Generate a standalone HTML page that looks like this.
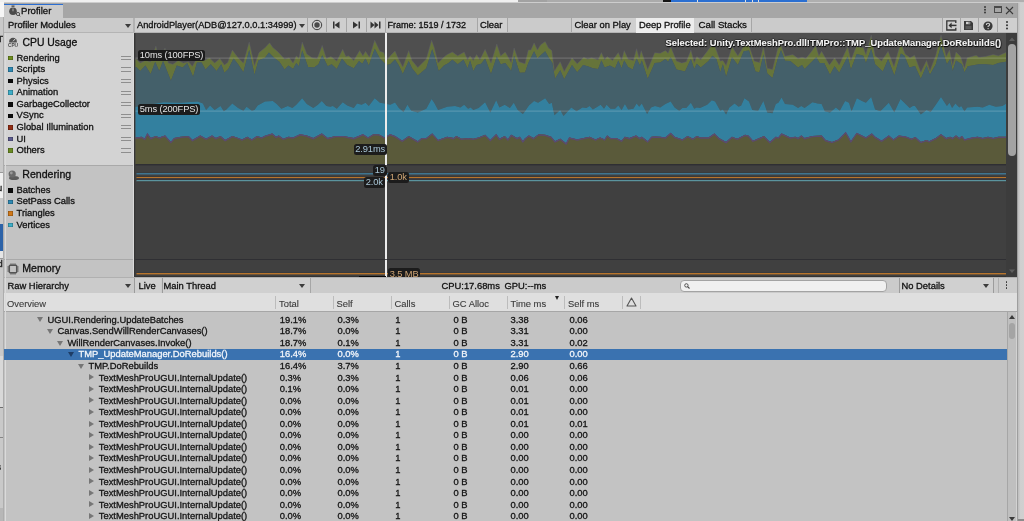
<!DOCTYPE html>
<html><head><meta charset="utf-8">
<style>
*{box-sizing:border-box;margin:0;padding:0}
html,body{width:1024px;height:521px;overflow:hidden;background:#c6c6c6}
body{position:relative;will-change:transform;font-family:"Liberation Sans",sans-serif;font-size:9.4px;color:#111}
.a{position:absolute}
.t{position:absolute;white-space:pre;line-height:12px;height:12px;-webkit-text-stroke:0.3px currentColor}
.sq{position:absolute;left:8px;width:4.7px;height:4.7px;box-shadow:inset 0 0 0 0.6px rgba(0,0,0,0.35);margin-top:0.6px}
.hb{position:absolute;left:121px;width:10px;height:4.3px;border-top:1.3px solid #8e8e8e;border-bottom:1.3px solid #8e8e8e}
.vs{position:absolute;width:1px;background:#a6a6a6}
.lbl{position:absolute;background:#1c1c1c;border-radius:2.5px;white-space:pre;font-size:9.3px;line-height:11.4px;height:11px;padding:0 1.8px;color:#e4e4e4;overflow:hidden;letter-spacing:-0.12px}
.r{position:absolute;left:4px;width:1003px;height:12px}
.r .t{top:0}
.sel .t{color:#fff}
.tri{position:absolute;width:0;height:0}
</style></head><body>
<!-- left background strip -->
<div class="a" style="left:0;top:0;width:4px;height:17px;background:#f6f6f6"></div>
<div class="a" style="left:0;top:17px;width:4px;height:504px;background:#c9c9c9"></div>
<div class="a" style="left:0;top:172px;width:4px;height:1px;background:#9a9a9a"></div>
<div class="a" style="left:0;top:173px;width:4px;height:25px;background:#f0f0f0"></div>
<div class="t" style="left:-3px;top:182px;color:#222">u</div>
<div class="a" style="left:0;top:223.5px;width:4px;height:27.5px;background:#2d63a8"></div>
<div class="a" style="left:0;top:251px;width:4px;height:7px;background:#e6e6e6"></div>
<div class="a" style="left:0;top:258px;width:4px;height:1px;background:#9a9a9a"></div>
<div class="t" style="left:-2.5px;top:258px;color:#222">d</div>
<div class="t" style="left:-2.5px;top:32.5px;color:#222">T</div>
<div class="a" style="left:0;top:356px;width:3.3px;height:51px;background:#d8d8d8"></div>
<div class="a" style="left:0;top:407px;width:3.3px;height:1px;background:#6e6e6e"></div>
<div class="a" style="left:0;top:437px;width:3.3px;height:1px;background:#858585"></div>
<div class="t" style="left:-3.5px;top:461px;color:#333">s</div>
<div class="a" style="left:0;top:508px;width:3.3px;height:13px;background:#b7b7b7"></div>


<!-- right strip -->
<div class="a" style="left:1016.5px;top:0;width:7.5px;height:521px;background:linear-gradient(to right,#bdbdbd,#cfcfcf 40%,#d0d0d0);border-left:1px solid #9e9e9e"></div>
<div class="a" style="left:1017.5px;top:519px;width:6.5px;height:2px;background:#8c8c8c"></div>

<!-- window top -->
<div class="a" style="left:0;top:0;width:1024px;height:2px;background:#f0f0f0"></div>
<div class="a" style="left:518px;top:0;width:29px;height:2px;background:#a2a2a2"></div>
<div class="a" style="left:547px;top:0;width:116px;height:2px;background:#ababab"></div>
<div class="a" style="left:663px;top:0;width:8px;height:2px;background:#151515"></div>
<div class="a" style="left:671px;top:0;width:136px;height:2px;background:#2b6fd1"></div>
<div class="a" style="left:697px;top:0;width:1px;height:2px;background:#e0e0e0"></div>
<div class="a" style="left:745px;top:0;width:1px;height:2px;background:#e0e0e0"></div>
<div class="a" style="left:752px;top:0;width:1px;height:2px;background:#e0e0e0"></div>
<div class="a" style="left:758px;top:0;width:1px;height:2px;background:#e0e0e0"></div>
<div class="a" style="left:807px;top:0;width:217px;height:2px;background:#afafaf"></div>
<div class="a" style="left:4px;top:1.5px;width:1020px;height:1.5px;background:#cdcdcd"></div>
<div class="a" style="left:4px;top:3px;width:1013px;height:15px;background:#a6a6a6"></div>
<div class="a" style="left:4px;top:4px;width:59px;height:14px;background:#cbcbcb"></div>
<div class="a" style="left:4px;top:3.5px;width:59px;height:1.5px;background:#2b6ed2"></div>
<div class="t" style="left:21px;top:5.2px;font-size:9.6px">Profiler</div>
<!-- tab icon -->
<svg class="a" style="left:8px;top:5px" width="13" height="12" viewBox="0 0 13 12">
 <rect x="3.5" y="0.5" width="3" height="1.3" fill="#444"/>
 <circle cx="5" cy="6.3" r="3.8" fill="#4a4a4a"/>
 <path d="M5 3.5 V6.3" stroke="#bbb" stroke-width="0.9"/>
 <circle cx="10" cy="9" r="1.6" fill="none" stroke="#444" stroke-width="0.9"/>
 <path d="M11 10 L12.3 11.3" stroke="#444" stroke-width="0.9"/>
</svg>
<!-- tab bar right icons -->
<div class="a" style="left:983.8px;top:6px;width:1.9px;height:1.9px;border-radius:1px;background:#3a3a3a;box-shadow:0 2.8px 0 #3a3a3a,0 5.6px 0 #3a3a3a"></div>
<div class="a" style="left:994px;top:6px;width:8px;height:7px;border:1px solid #4a4a4a;border-top-width:2px"></div>
<svg class="a" style="left:1005px;top:5.5px" width="9" height="9" viewBox="0 0 9 9"><path d="M1 1 L8 8 M8 1 L1 8" stroke="#3a3a3a" stroke-width="1.1"/></svg>

<!-- toolbar -->
<div class="a" style="left:4px;top:18px;width:1013px;height:15px;background:#cbcbcb"></div>
<div class="a" style="left:4px;top:32px;width:1013px;height:1px;background:#b4b4b4"></div>
<div class="t" style="left:8px;top:19px">Profiler Modules</div>
<div class="tri" style="left:125px;top:23.5px;border-left:3.5px solid transparent;border-right:3.5px solid transparent;border-top:4px solid #3c3c3c"></div>
<div class="a" style="left:133px;top:18px;width:2px;height:15px;background:#b2b2b2"></div>
<div class="a" style="left:135px;top:18px;width:172px;height:14px;background:#cfcfcf"></div>
<div class="t" style="left:137px;top:19px;font-size:9.25px">AndroidPlayer(ADB@127.0.0.1:34999)</div>
<div class="tri" style="left:298.5px;top:23.5px;border-left:3.5px solid transparent;border-right:3.5px solid transparent;border-top:4px solid #3c3c3c"></div>
<div class="vs" style="left:307px;top:18px;height:14px"></div>
<div class="a" style="left:308px;top:18px;width:18px;height:14px;background:#cfcfcf"></div>
<svg class="a" style="left:311px;top:19px" width="12" height="12" viewBox="0 0 12 12"><circle cx="6" cy="6" r="4.7" fill="none" stroke="#3f3f3f" stroke-width="1"/><circle cx="6" cy="6" r="2.7" fill="#4a4a4a"/></svg>
<div class="vs" style="left:326px;top:18px;height:14px"></div>
<div class="a" style="left:327px;top:18px;width:19px;height:14px;background:#cfcfcf"></div>
<svg class="a" style="left:332px;top:21px" width="9" height="8" viewBox="0 0 9 8"><rect x="1" y="0.5" width="1.5" height="7" fill="#333"/><polygon points="2.5,4 7.5,0.5 7.5,7.5" fill="#333"/></svg>
<div class="vs" style="left:346px;top:18px;height:14px"></div>
<div class="a" style="left:347px;top:18px;width:19px;height:14px;background:#cfcfcf"></div>
<svg class="a" style="left:352px;top:21px" width="9" height="8" viewBox="0 0 9 8"><rect x="6.5" y="0.5" width="1.5" height="7" fill="#333"/><polygon points="1,0.5 6,4 1,7.5" fill="#333"/></svg>
<div class="vs" style="left:365.5px;top:18px;height:14px"></div>
<div class="a" style="left:366.5px;top:18px;width:19px;height:14px;background:#cfcfcf"></div>
<svg class="a" style="left:370px;top:21px" width="12" height="8" viewBox="0 0 12 8"><polygon points="0.5,0.5 4.5,4 0.5,7.5" fill="#333"/><polygon points="4.5,0.5 8.5,4 4.5,7.5" fill="#333"/><rect x="9" y="0.5" width="1.5" height="7" fill="#333"/></svg>
<div class="vs" style="left:385px;top:18px;height:14px"></div>
<div class="t" style="left:387.5px;top:19px;font-size:9px">Frame: 1519 / 1732</div>
<div class="vs" style="left:477px;top:18px;height:14px"></div>
<div class="a" style="left:478px;top:18px;width:29px;height:14px;background:#cfcfcf"></div>
<div class="t" style="left:480px;top:19px">Clear</div>
<div class="vs" style="left:507px;top:18px;height:14px"></div>
<div class="vs" style="left:571px;top:18px;height:14px"></div>
<div class="a" style="left:572px;top:18px;width:64px;height:14px;background:#cfcfcf"></div>
<div class="t" style="left:574.5px;top:19px">Clear on Play</div>
<div class="a" style="left:636px;top:18px;width:58px;height:14.5px;background:#ededed"></div>
<div class="t" style="left:639px;top:19px">Deep Profile</div>
<div class="a" style="left:694px;top:18px;width:57px;height:14px;background:#cfcfcf"></div>
<div class="t" style="left:698.5px;top:19px;font-size:9.7px">Call Stacks</div>
<div class="vs" style="left:751px;top:18px;height:14px"></div>
<!-- right toolbar icons -->
<div class="vs" style="left:941.5px;top:18px;height:14px"></div>
<div class="a" style="left:942.5px;top:18px;width:74px;height:14px;background:#cfcfcf"></div>
<div class="vs" style="left:959.5px;top:18px;height:14px"></div>
<div class="vs" style="left:978px;top:18px;height:14px"></div>
<div class="vs" style="left:997px;top:18px;height:14px"></div>
<svg class="a" style="left:945.5px;top:20px" width="11" height="11" viewBox="0 0 11 11"><path d="M9.8 3 V0.8 H0.8 V10 H9.8 V7.8" fill="none" stroke="#333" stroke-width="1.3"/><path d="M10.5 5.4 H4" stroke="#333" stroke-width="1.5"/><path d="M2.5 5.4 L5.6 2.6 V8.2 Z" fill="#333"/></svg>
<svg class="a" style="left:964.3px;top:20.5px" width="9" height="9" viewBox="0 0 9 9"><path d="M0 0 H7 L9 2 V9 H0 Z" fill="#3a3a3a"/><rect x="2" y="0.8" width="4.2" height="2.4" fill="#cfcfcf"/><rect x="4.6" y="1.2" width="1" height="1.6" fill="#3a3a3a"/><rect x="1.5" y="4.8" width="6" height="3.4" fill="#5a5a5a"/></svg>
<svg class="a" style="left:983px;top:20.5px" width="10" height="10" viewBox="0 0 10 10"><circle cx="5" cy="5" r="4.6" fill="#3a3a3a"/><path d="M3.4 3.9 Q3.4 2.3 5 2.3 Q6.6 2.3 6.6 3.7 Q6.6 4.6 5.1 5.2 V6.1" fill="none" stroke="#cfcfcf" stroke-width="1.1"/><circle cx="5.1" cy="7.6" r="0.7" fill="#cfcfcf"/></svg>
<div class="a" style="left:1005.6px;top:20.8px;width:2px;height:2px;border-radius:1px;background:#333;box-shadow:0 3.3px 0 #333,0 6.6px 0 #333"></div>

<!-- left module panel -->
<div class="a" style="left:4px;top:33px;width:129px;height:132px;background:#d3d3d3"></div>
<div class="a" style="left:4px;top:165px;width:129px;height:1px;background:#a9a9a9"></div>
<div class="a" style="left:4px;top:166px;width:129px;height:93px;background:#c3c3c3"></div>
<div class="a" style="left:4px;top:259px;width:129px;height:1px;background:#a9a9a9"></div>
<div class="a" style="left:4px;top:260px;width:129px;height:17px;background:#c3c3c3"></div>
<div class="a" style="left:133px;top:33px;width:1px;height:244px;background:#dadada"></div>
<div class="a" style="left:134px;top:33px;width:1.7px;height:244px;background:#363636"></div>

<!-- CPU icon -->
<svg class="a" style="left:7px;top:35px" width="12" height="13" viewBox="0 0 12 13">
 <path d="M2.2 7.6 A3.9 3.9 0 1 1 9.8 7.6 Z" fill="#505050"/>
 <path d="M6 6.3 L8.2 3.9" stroke="#e0e0e0" stroke-width="0.9"/>
 <text x="6" y="12.4" font-family="Liberation Sans" font-size="4.8" font-weight="bold" text-anchor="middle" fill="#4a4a4a" textLength="10">CPU</text>
</svg>
<div class="t" style="left:22.5px;top:35.6px;font-size:10.4px;line-height:13px;height:13px">CPU Usage</div>

<div class="sq" style="top:55px;background:#6f8f1f"></div><div class="t" style="left:16.5px;top:51.5px">Rendering</div><div class="hb" style="top:55.90px"></div>
<div class="sq" style="top:66.6px;background:#2f8ab4"></div><div class="t" style="left:16.5px;top:63px">Scripts</div><div class="hb" style="top:67.45px"></div>
<div class="sq" style="top:78.2px;background:#0c0c0c"></div><div class="t" style="left:16.5px;top:74.6px">Physics</div><div class="hb" style="top:79.00px"></div>
<div class="sq" style="top:89.8px;background:#3eaec8"></div><div class="t" style="left:16.5px;top:86.2px">Animation</div><div class="hb" style="top:90.55px"></div>
<div class="sq" style="top:101.4px;background:#0c0c0c"></div><div class="t" style="left:16.5px;top:97.8px">GarbageCollector</div><div class="hb" style="top:102.10px"></div>
<div class="sq" style="top:113px;background:#0c0c0c"></div><div class="t" style="left:16.5px;top:109.4px">VSync</div><div class="hb" style="top:113.65px"></div>
<div class="sq" style="top:124.6px;background:#922d14"></div><div class="t" style="left:16.5px;top:121px">Global Illumination</div><div class="hb" style="top:125.20px"></div>
<div class="sq" style="top:136.2px;background:#5c5b8e"></div><div class="t" style="left:16.5px;top:132.6px">UI</div><div class="hb" style="top:136.75px"></div>
<div class="sq" style="top:147.8px;background:#6a8b22"></div><div class="t" style="left:16.5px;top:144.2px">Others</div><div class="hb" style="top:148.30px"></div>

<!-- Rendering module -->
<svg class="a" style="left:7px;top:168px" width="13" height="13" viewBox="0 0 13 13">
 <ellipse cx="7" cy="10" rx="5" ry="2" fill="#5c5c5c"/>
 <circle cx="5.2" cy="6" r="3.6" fill="#6a6a6a"/>
 <circle cx="4.3" cy="5" r="1.4" fill="#9a9a9a"/>
</svg>
<div class="t" style="left:22.3px;top:168.2px;font-size:10.6px;line-height:13px;height:13px">Rendering</div>
<div class="sq" style="top:187.5px;background:#0c0c0c"></div><div class="t" style="left:16.5px;top:183.8px">Batches</div>
<div class="sq" style="top:199px;background:#2f8ab4"></div><div class="t" style="left:16.5px;top:195.4px">SetPass Calls</div>
<div class="sq" style="top:210.6px;background:#d07818"></div><div class="t" style="left:16.5px;top:207px">Triangles</div>
<div class="sq" style="top:222.2px;background:#3eaec8"></div><div class="t" style="left:16.5px;top:218.6px">Vertices</div>

<!-- Memory module -->
<svg class="a" style="left:6.5px;top:263px" width="12" height="12" viewBox="0 0 12 12">
 <rect x="2.3" y="2.3" width="7.4" height="7.4" rx="1" fill="none" stroke="#555" stroke-width="1.5"/>
 <path d="M0.3 4 H2 M0.3 6 H2 M0.3 8 H2 M10 4 H11.7 M10 6 H11.7 M10 8 H11.7 M4 0.3 V2 M6 0.3 V2 M8 0.3 V2 M4 10 V11.7 M6 10 V11.7 M8 10 V11.7" stroke="#555" stroke-width="0.9"/>
</svg>
<div class="t" style="left:22.3px;top:262.2px;font-size:10.6px;line-height:13px;height:13px">Memory</div>

<svg class="a" style="left:0;top:0" width="1024" height="521" viewBox="0 0 1024 521">
<rect x="135.5" y="33" width="870.5" height="244" fill="#404040"/>
<rect x="135.5" y="33" width="870.5" height="131" fill="#4f4f4f"/>
<polygon fill="#66743a" points="135.5,59.1 136.3,59.1 140.2,63.0 145.4,60.4 150.7,61.7 155.9,46.1 159.2,60.4 165.0,48.0 168.3,63.0 172.9,64.3 178.1,60.4 183.3,63.0 188.5,61.7 192.4,66.3 196.4,59.1 200.3,58.5 204.2,60.4 209.4,57.8 214.6,63.0 219.9,58.5 224.4,65.0 227.7,62.4 232.3,50.0 238.1,57.8 243.4,63.0 249.2,42.1 254.5,65.6 259.0,52.6 265.0,47.7 269.6,42.8 272.8,47.4 278.1,51.9 284.6,59.1 289.2,57.8 293.1,63.0 296.3,55.8 298.9,58.5 302.2,42.1 306.8,53.9 312.0,57.8 317.2,58.5 322.2,45.4 326.4,58.5 330.9,56.5 336.8,61.1 342.7,49.3 345.9,56.5 348.6,55.8 353.8,60.4 359.6,50.6 362.9,55.8 365.5,51.3 369.4,57.2 374.7,40.2 379.9,51.3 383.8,52.6 386.4,60.4 390.3,55.8 395.0,51.0 398.3,58.5 402.8,66.9 408.7,50.6 412.0,60.4 417.8,67.6 426.3,59.1 431.6,40.2 434.2,47.4 438.1,63.0 444.6,56.5 447.2,54.5 452.4,51.9 457.7,55.8 464.2,51.9 467.5,59.8 470.1,55.8 473.3,60.4 476.6,54.5 479.9,59.8 485.1,49.3 491.0,63.0 496.8,44.1 500.7,55.8 505.3,51.9 511.2,62.4 514.1,48.0 519.0,61.7 525.0,63.7 528.3,50.0 530.9,50.0 534.1,42.8 537.4,50.0 540.7,44.7 545.2,41.5 548.5,48.0 551.8,50.6 554.4,70.9 560.2,61.7 564.2,71.5 572.0,57.8 577.2,63.7 583.7,57.2 587.7,59.1 591.6,57.8 598.1,59.8 601.4,52.6 604.6,59.8 607.2,56.5 612.5,60.4 618.3,52.6 621.6,60.4 624.2,50.6 628.1,59.1 633.4,60.4 636.6,48.7 639.2,58.5 641.2,50.6 647.7,69.6 654.7,52.7 660.2,53.2 665.4,50.6 668.1,53.2 670.7,46.7 676.5,61.1 681.8,63.0 686.3,61.7 690.9,50.0 694.2,62.4 696.8,56.5 700.7,59.8 707.2,51.3 711.1,46.1 715.1,46.7 720.3,61.1 722.9,60.4 726.1,65.6 732.0,46.7 737.9,55.8 743.8,46.1 749.0,45.4 754.2,61.1 759.4,62.4 763.4,46.1 767.3,68.2 772.5,69.6 777.7,48.7 781.0,45.4 785.0,56.2 792.8,54.5 798.1,58.5 802.0,57.2 805.9,58.5 811.1,51.9 815.7,45.4 818.9,55.8 821.6,51.3 829.4,65.0 834.6,57.8 839.2,65.0 847.7,46.7 850.9,60.4 856.1,46.7 863.3,47.4 865.9,54.5 871.2,35.0 875.1,55.8 881.6,61.1 888.1,51.3 894.0,66.6 899.6,46.4 901.8,45.4 905.1,53.9 910.0,57.8 914.6,55.2 920.8,72.2 926.6,60.4 929.9,70.9 935.8,55.2 941.0,35.0 946.2,56.5 949.5,50.0 952.7,65.6 956.0,51.9 960.6,56.5 964.5,68.2 967.1,57.8 976.2,55.2 978.9,57.2 985.4,56.5 993.2,54.5 998.4,55.8 1005.6,52.6 1006.0,52.6 1006.0,61.7 1005.6,61.7 998.4,63.0 993.2,65.0 985.4,64.3 978.9,64.3 967.8,66.3 964.5,72.2 961.9,64.3 956.0,60.4 952.7,70.9 950.1,59.1 946.9,64.3 941.0,45.4 935.8,64.3 929.9,74.8 926.6,65.6 920.8,78.7 915.0,66.0 909.3,67.6 904.4,55.8 900.9,53.6 894.3,75.4 888.1,59.1 882.9,71.5 875.1,64.3 871.2,48.7 865.9,63.0 863.3,55.8 856.8,53.9 850.9,69.6 847.7,56.5 839.2,72.8 834.6,66.3 830.0,74.8 824.2,63.0 819.6,63.0 816.3,57.2 804.6,68.9 802.0,65.0 798.1,67.6 790.2,61.1 785.0,60.7 781.0,50.0 777.7,59.1 772.5,78.0 767.3,73.5 763.4,54.5 759.4,72.2 755.5,71.5 749.0,50.6 743.8,51.3 737.9,65.0 732.0,57.2 726.1,76.7 722.9,64.3 720.3,72.2 716.4,59.1 712.4,55.8 708.5,61.1 700.7,67.6 696.8,63.7 694.2,68.9 690.9,59.1 685.0,71.5 676.5,69.6 670.7,57.2 668.1,61.7 665.4,59.1 660.2,62.4 654.7,62.9 647.7,78.7 641.8,60.4 639.9,65.6 636.6,58.5 632.7,69.6 628.1,66.9 624.2,60.4 621.6,68.2 618.3,60.4 615.1,68.2 609.9,65.6 604.6,67.6 601.4,60.4 598.1,68.9 592.9,68.2 587.7,66.3 583.1,65.0 577.2,72.2 572.0,65.0 564.2,79.3 560.2,70.2 555.0,78.7 552.4,63.0 548.5,57.2 545.2,51.3 540.7,55.2 537.4,58.5 534.1,51.3 528.3,63.0 525.0,72.5 519.7,72.8 514.1,55.8 511.2,70.9 505.3,63.0 500.7,64.3 496.8,56.5 491.0,74.1 485.1,58.5 481.2,63.7 476.6,65.0 473.3,70.9 470.1,60.4 467.5,68.2 463.5,59.8 457.7,64.3 452.4,59.8 448.5,63.0 444.0,65.6 438.7,70.9 434.8,57.2 432.2,49.3 426.3,68.2 417.8,75.4 412.0,68.2 408.7,61.1 402.8,74.1 398.9,65.6 395.0,59.4 390.3,64.3 386.4,65.0 379.9,58.5 374.7,48.7 368.8,65.6 365.5,58.5 362.3,63.7 359.0,61.1 353.8,68.2 347.2,65.0 342.0,58.5 336.8,68.9 331.6,64.3 327.7,66.3 322.2,55.2 318.5,64.3 314.0,67.6 308.1,66.9 302.2,50.6 298.9,66.3 296.3,63.0 293.1,68.9 288.5,65.6 284.6,69.6 279.4,61.7 274.1,57.8 268.9,52.6 265.0,57.8 258.4,60.4 254.5,74.8 249.2,50.0 243.4,72.2 238.1,64.3 233.6,58.5 228.3,68.9 224.4,72.8 221.2,64.3 216.6,70.9 210.7,64.3 205.5,69.6 201.6,62.4 197.0,62.4 193.1,76.7 187.2,63.0 182.7,67.6 176.8,65.6 170.9,80.7 163.1,61.1 159.2,70.9 155.2,61.7 150.7,74.1 145.4,65.6 140.2,70.9 136.3,66.9 135.5,66.9"/>
<polygon fill="#44606a" points="135.5,66.9 136.3,66.9 140.2,70.9 145.4,65.6 150.7,74.1 155.2,61.7 159.2,70.9 163.1,61.1 170.9,80.7 176.8,65.6 182.7,67.6 187.2,63.0 193.1,76.7 197.0,62.4 201.6,62.4 205.5,69.6 210.7,64.3 216.6,70.9 221.2,64.3 224.4,72.8 228.3,68.9 233.6,58.5 238.1,64.3 243.4,72.2 249.2,50.0 254.5,74.8 258.4,60.4 265.0,57.8 268.9,52.6 274.1,57.8 279.4,61.7 284.6,69.6 288.5,65.6 293.1,68.9 296.3,63.0 298.9,66.3 302.2,50.6 308.1,66.9 314.0,67.6 318.5,64.3 322.2,55.2 327.7,66.3 331.6,64.3 336.8,68.9 342.0,58.5 347.2,65.0 353.8,68.2 359.0,61.1 362.3,63.7 365.5,58.5 368.8,65.6 374.7,48.7 379.9,58.5 386.4,65.0 390.3,64.3 395.0,59.4 398.9,65.6 402.8,74.1 408.7,61.1 412.0,68.2 417.8,75.4 426.3,68.2 432.2,49.3 434.8,57.2 438.7,70.9 444.0,65.6 448.5,63.0 452.4,59.8 457.7,64.3 463.5,59.8 467.5,68.2 470.1,60.4 473.3,70.9 476.6,65.0 481.2,63.7 485.1,58.5 491.0,74.1 496.8,56.5 500.7,64.3 505.3,63.0 511.2,70.9 514.1,55.8 519.7,72.8 525.0,72.5 528.3,63.0 534.1,51.3 537.4,58.5 540.7,55.2 545.2,51.3 548.5,57.2 552.4,63.0 555.0,78.7 560.2,70.2 564.2,79.3 572.0,65.0 577.2,72.2 583.1,65.0 587.7,66.3 592.9,68.2 598.1,68.9 601.4,60.4 604.6,67.6 609.9,65.6 615.1,68.2 618.3,60.4 621.6,68.2 624.2,60.4 628.1,66.9 632.7,69.6 636.6,58.5 639.9,65.6 641.8,60.4 647.7,78.7 654.7,62.9 660.2,62.4 665.4,59.1 668.1,61.7 670.7,57.2 676.5,69.6 685.0,71.5 690.9,59.1 694.2,68.9 696.8,63.7 700.7,67.6 708.5,61.1 712.4,55.8 716.4,59.1 720.3,72.2 722.9,64.3 726.1,76.7 732.0,57.2 737.9,65.0 743.8,51.3 749.0,50.6 755.5,71.5 759.4,72.2 763.4,54.5 767.3,73.5 772.5,78.0 777.7,59.1 781.0,50.0 785.0,60.7 790.2,61.1 798.1,67.6 802.0,65.0 804.6,68.9 816.3,57.2 819.6,63.0 824.2,63.0 830.0,74.8 834.6,66.3 839.2,72.8 847.7,56.5 850.9,69.6 856.8,53.9 863.3,55.8 865.9,63.0 871.2,48.7 875.1,64.3 882.9,71.5 888.1,59.1 894.3,75.4 900.9,53.6 904.4,55.8 909.3,67.6 915.0,66.0 920.8,78.7 926.6,65.6 929.9,74.8 935.8,64.3 941.0,45.4 946.9,64.3 950.1,59.1 952.7,70.9 956.0,60.4 961.9,64.3 964.5,72.2 967.8,66.3 978.9,64.3 985.4,64.3 993.2,65.0 998.4,63.0 1005.6,61.7 1006.0,61.7 1006.0,104.1 1005.6,104.1 1002.4,106.1 995.8,106.7 989.3,104.8 982.8,107.4 977.6,106.7 967.1,107.4 964.5,111.3 961.2,106.1 959.3,107.4 955.4,103.5 952.1,108.1 949.5,102.8 946.9,106.1 941.0,97.0 935.8,104.8 930.6,112.0 926.6,110.0 920.8,114.6 917.5,109.4 915.0,106.1 912.9,106.1 909.7,108.1 900.5,98.9 894.3,112.3 888.8,102.8 880.3,111.3 875.1,109.4 871.2,97.0 865.9,102.8 862.0,100.9 856.8,98.3 851.6,111.3 849.0,102.8 845.1,100.9 839.8,110.7 835.9,107.4 830.0,112.6 824.8,111.3 821.6,104.1 817.6,103.5 812.4,102.2 804.6,108.1 801.3,106.1 798.1,108.1 792.8,104.8 785.0,104.1 781.6,97.6 778.4,102.8 775.8,104.1 772.5,113.3 767.3,112.6 763.4,100.9 758.1,110.7 752.3,110.0 749.0,101.5 744.4,98.3 741.2,105.4 738.6,106.7 734.6,103.5 729.4,107.4 726.1,114.6 722.9,109.4 720.3,110.7 715.1,101.5 711.8,100.2 707.2,104.8 700.0,108.1 696.8,107.4 694.2,108.7 690.9,102.8 686.3,108.1 682.4,108.1 679.2,110.7 674.6,107.4 670.7,101.5 665.4,104.1 660.2,107.4 655.0,106.1 651.0,107.4 647.1,113.9 641.8,103.5 639.2,106.7 636.6,103.5 633.4,108.7 628.1,109.4 624.9,104.1 621.6,110.0 618.3,105.4 615.1,108.7 610.5,108.7 606.6,104.8 604.0,108.7 600.7,104.8 592.9,109.4 589.6,106.1 586.4,108.1 582.4,107.4 576.6,111.3 571.3,107.4 563.5,115.9 560.2,110.0 554.4,115.2 551.8,102.8 549.2,104.1 545.2,98.3 538.1,102.8 534.1,100.9 528.9,105.4 525.0,111.3 522.9,113.9 517.7,110.0 513.8,102.8 509.9,108.1 504.7,104.8 499.4,107.4 496.2,100.2 490.3,112.6 485.1,102.2 478.6,108.1 473.3,110.0 470.7,107.4 468.1,108.7 464.2,104.8 460.3,107.4 455.1,106.1 447.2,106.7 438.1,110.0 434.2,102.8 431.6,98.9 426.3,108.7 417.8,112.6 411.3,110.7 407.4,104.8 403.5,112.0 398.9,108.1 395.0,102.5 390.3,104.8 384.5,103.5 379.9,102.8 374.7,98.3 368.8,106.1 365.5,102.8 361.6,104.8 357.0,103.5 353.8,108.1 347.2,105.4 342.7,102.2 336.8,108.7 332.9,106.1 330.3,106.7 326.4,106.1 321.8,100.9 317.9,104.8 313.3,108.1 306.8,104.1 302.2,98.3 296.3,104.8 292.4,108.1 287.8,106.1 281.3,108.7 276.7,104.1 272.8,100.9 265.0,101.5 257.7,105.4 254.5,110.0 251.8,110.7 246.6,106.7 243.4,110.7 238.1,108.1 232.3,103.5 226.4,109.4 223.8,111.3 220.5,106.1 214.6,110.0 210.1,105.4 206.1,110.0 202.9,103.5 197.7,101.5 180.7,102.8 163.7,102.2 148.1,104.8 136.3,106.7 135.5,106.7"/>
<polyline fill="none" stroke="#5d5a6e" stroke-opacity="0.6" stroke-width="0.8" points="135.5,59.1 136.3,59.1 140.2,63.0 145.4,60.4 150.7,61.7 155.9,46.1 159.2,60.4 165.0,48.0 168.3,63.0 172.9,64.3 178.1,60.4 183.3,63.0 188.5,61.7 192.4,66.3 196.4,59.1 200.3,58.5 204.2,60.4 209.4,57.8 214.6,63.0 219.9,58.5 224.4,65.0 227.7,62.4 232.3,50.0 238.1,57.8 243.4,63.0 249.2,42.1 254.5,65.6 259.0,52.6 265.0,47.7 269.6,42.8 272.8,47.4 278.1,51.9 284.6,59.1 289.2,57.8 293.1,63.0 296.3,55.8 298.9,58.5 302.2,42.1 306.8,53.9 312.0,57.8 317.2,58.5 322.2,45.4 326.4,58.5 330.9,56.5 336.8,61.1 342.7,49.3 345.9,56.5 348.6,55.8 353.8,60.4 359.6,50.6 362.9,55.8 365.5,51.3 369.4,57.2 374.7,40.2 379.9,51.3 383.8,52.6 386.4,60.4 390.3,55.8 395.0,51.0 398.3,58.5 402.8,66.9 408.7,50.6 412.0,60.4 417.8,67.6 426.3,59.1 431.6,40.2 434.2,47.4 438.1,63.0 444.6,56.5 447.2,54.5 452.4,51.9 457.7,55.8 464.2,51.9 467.5,59.8 470.1,55.8 473.3,60.4 476.6,54.5 479.9,59.8 485.1,49.3 491.0,63.0 496.8,44.1 500.7,55.8 505.3,51.9 511.2,62.4 514.1,48.0 519.0,61.7 525.0,63.7 528.3,50.0 530.9,50.0 534.1,42.8 537.4,50.0 540.7,44.7 545.2,41.5 548.5,48.0 551.8,50.6 554.4,70.9 560.2,61.7 564.2,71.5 572.0,57.8 577.2,63.7 583.7,57.2 587.7,59.1 591.6,57.8 598.1,59.8 601.4,52.6 604.6,59.8 607.2,56.5 612.5,60.4 618.3,52.6 621.6,60.4 624.2,50.6 628.1,59.1 633.4,60.4 636.6,48.7 639.2,58.5 641.2,50.6 647.7,69.6 654.7,52.7 660.2,53.2 665.4,50.6 668.1,53.2 670.7,46.7 676.5,61.1 681.8,63.0 686.3,61.7 690.9,50.0 694.2,62.4 696.8,56.5 700.7,59.8 707.2,51.3 711.1,46.1 715.1,46.7 720.3,61.1 722.9,60.4 726.1,65.6 732.0,46.7 737.9,55.8 743.8,46.1 749.0,45.4 754.2,61.1 759.4,62.4 763.4,46.1 767.3,68.2 772.5,69.6 777.7,48.7 781.0,45.4 785.0,56.2 792.8,54.5 798.1,58.5 802.0,57.2 805.9,58.5 811.1,51.9 815.7,45.4 818.9,55.8 821.6,51.3 829.4,65.0 834.6,57.8 839.2,65.0 847.7,46.7 850.9,60.4 856.1,46.7 863.3,47.4 865.9,54.5 871.2,35.0 875.1,55.8 881.6,61.1 888.1,51.3 894.0,66.6 899.6,46.4 901.8,45.4 905.1,53.9 910.0,57.8 914.6,55.2 920.8,72.2 926.6,60.4 929.9,70.9 935.8,55.2 941.0,35.0 946.2,56.5 949.5,50.0 952.7,65.6 956.0,51.9 960.6,56.5 964.5,68.2 967.1,57.8 976.2,55.2 978.9,57.2 985.4,56.5 993.2,54.5 998.4,55.8 1005.6,52.6 1006.0,52.6"/>
<polygon fill="#33809f" points="135.5,106.7 136.3,106.7 148.1,104.8 163.7,102.2 180.7,102.8 197.7,101.5 202.9,103.5 206.1,110.0 210.1,105.4 214.6,110.0 220.5,106.1 223.8,111.3 226.4,109.4 232.3,103.5 238.1,108.1 243.4,110.7 246.6,106.7 251.8,110.7 254.5,110.0 257.7,105.4 265.0,101.5 272.8,100.9 276.7,104.1 281.3,108.7 287.8,106.1 292.4,108.1 296.3,104.8 302.2,98.3 306.8,104.1 313.3,108.1 317.9,104.8 321.8,100.9 326.4,106.1 330.3,106.7 332.9,106.1 336.8,108.7 342.7,102.2 347.2,105.4 353.8,108.1 357.0,103.5 361.6,104.8 365.5,102.8 368.8,106.1 374.7,98.3 379.9,102.8 384.5,103.5 390.3,104.8 395.0,102.5 398.9,108.1 403.5,112.0 407.4,104.8 411.3,110.7 417.8,112.6 426.3,108.7 431.6,98.9 434.2,102.8 438.1,110.0 447.2,106.7 455.1,106.1 460.3,107.4 464.2,104.8 468.1,108.7 470.7,107.4 473.3,110.0 478.6,108.1 485.1,102.2 490.3,112.6 496.2,100.2 499.4,107.4 504.7,104.8 509.9,108.1 513.8,102.8 517.7,110.0 522.9,113.9 525.0,111.3 528.9,105.4 534.1,100.9 538.1,102.8 545.2,98.3 549.2,104.1 551.8,102.8 554.4,115.2 560.2,110.0 563.5,115.9 571.3,107.4 576.6,111.3 582.4,107.4 586.4,108.1 589.6,106.1 592.9,109.4 600.7,104.8 604.0,108.7 606.6,104.8 610.5,108.7 615.1,108.7 618.3,105.4 621.6,110.0 624.9,104.1 628.1,109.4 633.4,108.7 636.6,103.5 639.2,106.7 641.8,103.5 647.1,113.9 651.0,107.4 655.0,106.1 660.2,107.4 665.4,104.1 670.7,101.5 674.6,107.4 679.2,110.7 682.4,108.1 686.3,108.1 690.9,102.8 694.2,108.7 696.8,107.4 700.0,108.1 707.2,104.8 711.8,100.2 715.1,101.5 720.3,110.7 722.9,109.4 726.1,114.6 729.4,107.4 734.6,103.5 738.6,106.7 741.2,105.4 744.4,98.3 749.0,101.5 752.3,110.0 758.1,110.7 763.4,100.9 767.3,112.6 772.5,113.3 775.8,104.1 778.4,102.8 781.6,97.6 785.0,104.1 792.8,104.8 798.1,108.1 801.3,106.1 804.6,108.1 812.4,102.2 817.6,103.5 821.6,104.1 824.8,111.3 830.0,112.6 835.9,107.4 839.8,110.7 845.1,100.9 849.0,102.8 851.6,111.3 856.8,98.3 862.0,100.9 865.9,102.8 871.2,97.0 875.1,109.4 880.3,111.3 888.8,102.8 894.3,112.3 900.5,98.9 909.7,108.1 912.9,106.1 915.0,106.1 917.5,109.4 920.8,114.6 926.6,110.0 930.6,112.0 935.8,104.8 941.0,97.0 946.9,106.1 949.5,102.8 952.1,108.1 955.4,103.5 959.3,107.4 961.2,106.1 964.5,111.3 967.1,107.4 977.6,106.7 982.8,107.4 989.3,104.8 995.8,106.7 1002.4,106.1 1005.6,104.1 1006.0,104.1 1006.0,136.8 1005.6,136.8 998.4,136.8 993.2,138.1 988.0,136.8 982.8,138.1 977.6,136.8 972.3,137.4 964.5,139.4 961.9,136.1 959.3,138.1 956.0,135.5 952.7,138.1 950.1,136.8 946.2,138.1 941.0,134.2 935.8,138.1 929.2,141.3 926.6,140.0 920.8,142.0 915.3,137.1 911.6,138.7 905.4,136.4 898.9,135.5 893.4,139.4 888.8,135.5 881.6,140.7 875.1,136.8 871.8,133.5 865.9,137.4 862.0,135.5 856.8,132.9 850.9,141.3 845.7,132.2 838.5,139.4 832.0,142.0 825.5,140.0 821.6,135.5 812.4,136.1 804.6,138.1 801.3,135.5 798.1,138.1 795.4,136.8 790.2,137.4 785.0,135.1 781.6,133.5 778.4,137.4 775.8,136.8 769.9,142.0 764.0,136.1 759.4,138.1 752.9,140.7 748.3,135.5 745.1,134.8 737.2,138.7 732.0,136.8 726.1,142.0 719.0,138.1 714.4,133.5 708.5,137.4 700.7,137.4 696.8,136.1 692.9,138.7 687.6,136.1 682.4,139.4 674.6,136.8 670.7,132.9 665.4,137.4 660.2,136.8 655.0,136.4 651.6,136.8 647.7,141.3 641.8,136.8 639.9,138.1 636.0,135.5 629.4,138.1 624.9,136.8 621.6,140.7 616.4,138.1 610.5,138.1 607.2,135.5 604.6,139.4 600.1,137.4 595.5,139.4 589.6,136.8 583.7,138.1 577.2,139.4 569.4,137.4 566.1,143.3 560.2,138.7 555.0,141.3 551.1,136.8 545.2,134.8 538.7,134.2 533.5,138.1 528.9,135.5 525.0,138.4 522.9,141.3 519.7,136.8 517.1,138.1 511.2,134.8 507.9,139.4 504.7,136.1 499.4,138.7 496.2,134.2 490.3,140.0 485.1,134.8 478.6,137.4 473.3,138.7 468.1,138.1 461.6,138.7 456.4,136.1 453.7,138.1 447.2,136.8 438.1,140.0 432.2,133.5 426.3,138.1 421.8,138.1 417.8,141.3 408.7,136.1 402.2,140.7 395.0,136.1 390.3,134.2 384.5,137.4 378.6,134.2 373.4,134.2 368.1,137.4 362.9,134.2 353.8,138.1 343.3,136.1 335.5,136.1 327.7,138.1 321.8,133.5 313.3,138.1 306.8,135.5 300.2,134.2 293.1,137.4 288.5,136.8 283.3,138.7 278.7,135.5 276.1,136.8 272.2,133.5 265.0,135.8 261.6,137.4 257.1,136.1 251.8,139.4 247.3,136.8 242.0,139.4 236.8,137.4 232.3,136.1 225.1,140.0 220.5,136.1 215.9,138.1 212.0,135.5 206.1,138.7 200.3,135.5 192.4,140.0 188.5,136.1 180.7,136.8 174.2,138.1 170.9,142.0 165.0,135.5 159.2,137.4 155.9,136.1 150.7,138.1 147.4,133.5 144.8,138.7 141.5,136.8 136.3,137.4 135.5,137.4"/>
<polygon fill="#5a5a3a" points="135.5,137.4 136.3,137.4 141.5,136.8 144.8,138.7 147.4,133.5 150.7,138.1 155.9,136.1 159.2,137.4 165.0,135.5 170.9,142.0 174.2,138.1 180.7,136.8 188.5,136.1 192.4,140.0 200.3,135.5 206.1,138.7 212.0,135.5 215.9,138.1 220.5,136.1 225.1,140.0 232.3,136.1 236.8,137.4 242.0,139.4 247.3,136.8 251.8,139.4 257.1,136.1 261.6,137.4 265.0,135.8 272.2,133.5 276.1,136.8 278.7,135.5 283.3,138.7 288.5,136.8 293.1,137.4 300.2,134.2 306.8,135.5 313.3,138.1 321.8,133.5 327.7,138.1 335.5,136.1 343.3,136.1 353.8,138.1 362.9,134.2 368.1,137.4 373.4,134.2 378.6,134.2 384.5,137.4 390.3,134.2 395.0,136.1 402.2,140.7 408.7,136.1 417.8,141.3 421.8,138.1 426.3,138.1 432.2,133.5 438.1,140.0 447.2,136.8 453.7,138.1 456.4,136.1 461.6,138.7 468.1,138.1 473.3,138.7 478.6,137.4 485.1,134.8 490.3,140.0 496.2,134.2 499.4,138.7 504.7,136.1 507.9,139.4 511.2,134.8 517.1,138.1 519.7,136.8 522.9,141.3 525.0,138.4 528.9,135.5 533.5,138.1 538.7,134.2 545.2,134.8 551.1,136.8 555.0,141.3 560.2,138.7 566.1,143.3 569.4,137.4 577.2,139.4 583.7,138.1 589.6,136.8 595.5,139.4 600.1,137.4 604.6,139.4 607.2,135.5 610.5,138.1 616.4,138.1 621.6,140.7 624.9,136.8 629.4,138.1 636.0,135.5 639.9,138.1 641.8,136.8 647.7,141.3 651.6,136.8 655.0,136.4 660.2,136.8 665.4,137.4 670.7,132.9 674.6,136.8 682.4,139.4 687.6,136.1 692.9,138.7 696.8,136.1 700.7,137.4 708.5,137.4 714.4,133.5 719.0,138.1 726.1,142.0 732.0,136.8 737.2,138.7 745.1,134.8 748.3,135.5 752.9,140.7 759.4,138.1 764.0,136.1 769.9,142.0 775.8,136.8 778.4,137.4 781.6,133.5 785.0,135.1 790.2,137.4 795.4,136.8 798.1,138.1 801.3,135.5 804.6,138.1 812.4,136.1 821.6,135.5 825.5,140.0 832.0,142.0 838.5,139.4 845.7,132.2 850.9,141.3 856.8,132.9 862.0,135.5 865.9,137.4 871.8,133.5 875.1,136.8 881.6,140.7 888.8,135.5 893.4,139.4 898.9,135.5 905.4,136.4 911.6,138.7 915.3,137.1 920.8,142.0 926.6,140.0 929.2,141.3 935.8,138.1 941.0,134.2 946.2,138.1 950.1,136.8 952.7,138.1 956.0,135.5 959.3,138.1 961.9,136.1 964.5,139.4 972.3,137.4 977.6,136.8 982.8,138.1 988.0,136.8 993.2,138.1 998.4,136.8 1005.6,136.8 1006.0,136.8 1006.0,164.5 135.5,164.5"/>
<polyline fill="none" stroke="#5b4a72" stroke-width="1.3" points="135.5,138.0 136.3,138.0 141.5,137.4 144.8,139.3 147.4,134.1 150.7,138.7 155.9,136.7 159.2,138.0 165.0,136.1 170.9,142.6 174.2,138.7 180.7,137.4 188.5,136.7 192.4,140.6 200.3,136.1 206.1,139.3 212.0,136.1 215.9,138.7 220.5,136.7 225.1,140.6 232.3,136.7 236.8,138.0 242.0,140.0 247.3,137.4 251.8,140.0 257.1,136.7 261.6,138.0 265.0,136.4 272.2,134.1 276.1,137.4 278.7,136.1 283.3,139.3 288.5,137.4 293.1,138.0 300.2,134.8 306.8,136.1 313.3,138.7 321.8,134.1 327.7,138.7 335.5,136.7 343.3,136.7 353.8,138.7 362.9,134.8 368.1,138.0 373.4,134.8 378.6,134.8 384.5,138.0 390.3,134.8 395.0,136.7 402.2,141.3 408.7,136.7 417.8,141.9 421.8,138.7 426.3,138.7 432.2,134.1 438.1,140.6 447.2,137.4 453.7,138.7 456.4,136.7 461.6,139.3 468.1,138.7 473.3,139.3 478.6,138.0 485.1,135.4 490.3,140.6 496.2,134.8 499.4,139.3 504.7,136.7 507.9,140.0 511.2,135.4 517.1,138.7 519.7,137.4 522.9,141.9 525.0,139.0 528.9,136.1 533.5,138.7 538.7,134.8 545.2,135.4 551.1,137.4 555.0,141.9 560.2,139.3 566.1,143.9 569.4,138.0 577.2,140.0 583.7,138.7 589.6,137.4 595.5,140.0 600.1,138.0 604.6,140.0 607.2,136.1 610.5,138.7 616.4,138.7 621.6,141.3 624.9,137.4 629.4,138.7 636.0,136.1 639.9,138.7 641.8,137.4 647.7,141.9 651.6,137.4 655.0,137.0 660.2,137.4 665.4,138.0 670.7,133.5 674.6,137.4 682.4,140.0 687.6,136.7 692.9,139.3 696.8,136.7 700.7,138.0 708.5,138.0 714.4,134.1 719.0,138.7 726.1,142.6 732.0,137.4 737.2,139.3 745.1,135.4 748.3,136.1 752.9,141.3 759.4,138.7 764.0,136.7 769.9,142.6 775.8,137.4 778.4,138.0 781.6,134.1 785.0,135.7 790.2,138.0 795.4,137.4 798.1,138.7 801.3,136.1 804.6,138.7 812.4,136.7 821.6,136.1 825.5,140.6 832.0,142.6 838.5,140.0 845.7,132.8 850.9,141.9 856.8,133.5 862.0,136.1 865.9,138.0 871.8,134.1 875.1,137.4 881.6,141.3 888.8,136.1 893.4,140.0 898.9,136.1 905.4,137.0 911.6,139.3 915.3,137.7 920.8,142.6 926.6,140.6 929.2,141.9 935.8,138.7 941.0,134.8 946.2,138.7 950.1,137.4 952.7,138.7 956.0,136.1 959.3,138.7 961.9,136.7 964.5,140.0 972.3,138.0 977.6,137.4 982.8,138.7 988.0,137.4 993.2,138.7 998.4,137.4 1005.6,137.4 1006.0,137.4"/>
<rect x="135.5" y="57.6" width="870.5" height="1" fill="#ffffff" fill-opacity="0.22"/>
<rect x="135.5" y="110.6" width="870.5" height="1" fill="#ffffff" fill-opacity="0.22"/>
<rect x="135.5" y="164" width="870.5" height="1.6" fill="#2f2f33"/>
<rect x="135.5" y="165.6" width="870.5" height="93.4" fill="#404040"/>
<rect x="135.5" y="259" width="870.5" height="1" fill="#2f2f33"/>
<rect x="135.5" y="260" width="870.5" height="17" fill="#404040"/>
<rect x="135.5" y="276" width="870.5" height="1" fill="#333"/>
<rect x="136.5" y="172.3" width="869.5" height="0.6" fill="#36393c"/>
<rect x="136.5" y="173" width="869.5" height="1.5" fill="#3f7590"/>
<rect x="136.5" y="176.3" width="869.5" height="0.6" fill="#3a3530"/>
<rect x="136.5" y="177" width="869.5" height="1.3" fill="#b8752c"/>
<rect x="136.5" y="178.3" width="869.5" height="1.5" fill="#36363c"/>
<rect x="136.5" y="180" width="869.5" height="1.5" fill="#5b949e"/>
<rect x="136.5" y="181.5" width="869.5" height="0.6" fill="#3a3838"/>
<rect x="136.5" y="273" width="869.5" height="1.4" fill="#b8752c"/>
<rect x="136.5" y="272.3" width="869.5" height="0.7" fill="#353a40"/>
<rect x="1006" y="33" width="11" height="244" fill="#3c3c3c"/>
<rect x="1008" y="44" width="8" height="112" rx="4" fill="#a3a3a3"/>
<polygon points="1009,41 1012,37.5 1015,41" fill="#5e5e5e"/>
<polygon points="1009,269.5 1012,273 1015,269.5" fill="#5e5e5e"/>
</svg>

<!-- chart overlays -->
<div class="lbl" style="left:138px;top:50px">10ms (100FPS)</div>
<div class="lbl" style="left:138px;top:103.5px">5ms (200FPS)</div>
<div class="a" style="left:385px;top:33px;width:2.4px;height:244px;background:#ececec"></div>
<div class="a" style="left:385px;top:164.5px;width:2.4px;height:1px;background:#555"></div>
<div class="a" style="left:385px;top:259px;width:2.4px;height:1px;background:#555"></div>
<div class="a" style="left:359px;top:275.5px;width:27px;height:1.5px;background:#0a0a0a"></div>
<div class="lbl" style="left:353.5px;top:143.5px;color:#a9c6d6">2.91ms</div>
<div class="lbl" style="left:373px;top:165px;color:#a9c6d6">19</div>
<div class="lbl" style="left:364px;top:177px;color:#a9c6d6">2.0k</div>
<div class="lbl" style="left:388px;top:171.5px;color:#cfa574">1.0k</div>
<div class="lbl" style="left:388px;top:268px;color:#cfa574;height:9px;line-height:12px;overflow:hidden">3.5 MB</div>
<div class="t" style="left:665.5px;top:36.5px;font-weight:bold;color:#f4f4f4;-webkit-text-stroke:0.15px #f4f4f4;text-shadow:0 0 1px #000,0 0 1px #000,0 0 1.5px #000,0.5px 0.5px 1px #000">Selected: Unity.TextMeshPro.dll!TMPro::TMP_UpdateManager.DoRebuilds()</div>

<!-- second toolbar -->
<div class="a" style="left:4px;top:277px;width:1013px;height:16px;background:#cbcbcb"></div>
<div class="a" style="left:4px;top:277px;width:1013px;height:1px;background:#b0b0b0"></div>
<div class="t" style="left:7.5px;top:279.5px">Raw Hierarchy</div>
<div class="tri" style="left:124.5px;top:283.5px;border-left:3.5px solid transparent;border-right:3.5px solid transparent;border-top:4px solid #3c3c3c"></div>
<div class="vs" style="left:134px;top:278px;height:15px;background:#9c9c9c"></div>
<div class="a" style="left:135px;top:278px;width:26px;height:15px;background:#d0d0d0"></div>
<div class="t" style="left:138.5px;top:279.5px">Live</div>
<div class="vs" style="left:161.5px;top:278px;height:15px;background:#9c9c9c"></div>
<div class="a" style="left:162.5px;top:278px;width:147px;height:15px;background:#d0d0d0"></div>
<div class="t" style="left:163.5px;top:279.5px">Main Thread</div>
<div class="tri" style="left:298.5px;top:283.5px;border-left:3.5px solid transparent;border-right:3.5px solid transparent;border-top:4px solid #3c3c3c"></div>
<div class="vs" style="left:309.5px;top:278px;height:15px"></div>
<div class="t" style="left:441.5px;top:279.5px">CPU:17.68ms</div>
<div class="t" style="left:504.5px;top:279.5px">GPU:--ms</div>
<div class="a" style="left:679.5px;top:280px;width:207px;height:12px;background:#f0f0f0;border:1px solid #a3a3a3;border-radius:4px"></div>
<svg class="a" style="left:684px;top:283px" width="6" height="6" viewBox="0 0 6 6"><circle cx="2.4" cy="2.4" r="1.7" fill="none" stroke="#444" stroke-width="0.9"/><path d="M3.6 3.6 L5.5 5.5" stroke="#444" stroke-width="1.1"/></svg>
<div class="vs" style="left:898.5px;top:278px;height:15px;background:#9c9c9c"></div>
<div class="a" style="left:899.5px;top:278px;width:93px;height:15px;background:#d0d0d0"></div>
<div class="t" style="left:901.5px;top:279.5px">No Details</div>
<div class="tri" style="left:982.5px;top:283.5px;border-left:3.5px solid transparent;border-right:3.5px solid transparent;border-top:4px solid #3c3c3c"></div>
<div class="vs" style="left:992.5px;top:278px;height:15px;background:#9c9c9c"></div>
<div class="vs" style="left:997.5px;top:278px;height:15px;background:#b0b0b0"></div>
<div class="a" style="left:1005.6px;top:281.3px;width:1.9px;height:1.9px;border-radius:1px;background:#333;box-shadow:0 3px 0 #333,0 6px 0 #333"></div>

<!-- header -->
<div class="a" style="left:4px;top:293px;width:1013px;height:19px;background:#dfdfdf"></div>
<div class="a" style="left:4px;top:311px;width:1013px;height:1px;background:#a6a6a6"></div>
<div class="t" style="left:7px;top:297.5px;color:#3c3c3c;-webkit-text-stroke:0.12px #3c3c3c">Overview</div>
<div class="vs" style="left:274.9px;top:296px;height:13px;background:#bcbcbc"></div><div class="t" style="left:279px;top:297.5px;color:#3c3c3c;-webkit-text-stroke:0.12px #3c3c3c">Total</div>
<div class="vs" style="left:332.9px;top:296px;height:13px;background:#bcbcbc"></div><div class="t" style="left:336.5px;top:297.5px;color:#3c3c3c;-webkit-text-stroke:0.12px #3c3c3c">Self</div>
<div class="vs" style="left:390.9px;top:296px;height:13px;background:#bcbcbc"></div><div class="t" style="left:394.5px;top:297.5px;color:#3c3c3c;-webkit-text-stroke:0.12px #3c3c3c">Calls</div>
<div class="vs" style="left:448.9px;top:296px;height:13px;background:#bcbcbc"></div><div class="t" style="left:452.5px;top:297.5px;color:#3c3c3c;-webkit-text-stroke:0.12px #3c3c3c">GC Alloc</div>
<div class="vs" style="left:506.9px;top:296px;height:13px;background:#bcbcbc"></div><div class="t" style="left:510.5px;top:297.5px;color:#3c3c3c;-webkit-text-stroke:0.12px #3c3c3c">Time ms</div>
<div class="tri" style="left:554.5px;top:296px;border-left:2.8px solid transparent;border-right:2.8px solid transparent;border-top:4px solid #222"></div>
<div class="vs" style="left:564.4px;top:296px;height:13px;background:#bcbcbc"></div><div class="t" style="left:568px;top:297.5px;color:#3c3c3c;-webkit-text-stroke:0.12px #3c3c3c">Self ms</div>
<div class="vs" style="left:622.4px;top:296px;height:13px;background:#bcbcbc"></div>
<svg class="a" style="left:626px;top:297px" width="11" height="10" viewBox="0 0 11 10"><path d="M5.5 1 L10 9 H1 Z" fill="none" stroke="#555" stroke-width="1.1" stroke-linejoin="round"/></svg>
<div class="vs" style="left:639.9px;top:296px;height:13px;background:#bcbcbc"></div>

<!-- table -->
<div class="a" style="left:4px;top:312px;width:1003px;height:209px;background:#c3c3c3"></div>
<div class="a" style="left:3.3px;top:17px;width:1.2px;height:504px;background:#adadad"></div>
<div class="a" style="left:4.5px;top:33px;width:1px;height:488px;background:#dadada"></div>
<div class="tri" style="left:37.1px;top:317.4px;border-left:3.3px solid transparent;border-right:3.3px solid transparent;border-top:5.3px solid #767676"></div>
<div class="t" style="left:47.50px;top:313.8px;color:#141414">UGUI.Rendering.UpdateBatches</div>
<div class="t" style="left:279.75px;top:313.8px;color:#141414">19.1%</div>
<div class="t" style="left:337.50px;top:313.8px;color:#141414">0.3%</div>
<div class="t" style="left:395.25px;top:313.8px;color:#141414">1</div>
<div class="t" style="left:453.50px;top:313.8px;color:#141414">0 B</div>
<div class="t" style="left:510.50px;top:313.8px;color:#141414">3.38</div>
<div class="t" style="left:569.50px;top:313.8px;color:#141414">0.06</div>
<div class="tri" style="left:47.1px;top:328.9px;border-left:3.3px solid transparent;border-right:3.3px solid transparent;border-top:5.3px solid #767676"></div>
<div class="t" style="left:57.50px;top:325.3px;color:#141414">Canvas.SendWillRenderCanvases()</div>
<div class="t" style="left:279.75px;top:325.3px;color:#141414">18.7%</div>
<div class="t" style="left:337.50px;top:325.3px;color:#141414">0.0%</div>
<div class="t" style="left:395.25px;top:325.3px;color:#141414">1</div>
<div class="t" style="left:453.50px;top:325.3px;color:#141414">0 B</div>
<div class="t" style="left:510.50px;top:325.3px;color:#141414">3.31</div>
<div class="t" style="left:569.50px;top:325.3px;color:#141414">0.00</div>
<div class="tri" style="left:57.1px;top:340.5px;border-left:3.3px solid transparent;border-right:3.3px solid transparent;border-top:5.3px solid #767676"></div>
<div class="t" style="left:67.50px;top:336.9px;color:#141414">WillRenderCanvases.Invoke()</div>
<div class="t" style="left:279.75px;top:336.9px;color:#141414">18.7%</div>
<div class="t" style="left:337.50px;top:336.9px;color:#141414">0.1%</div>
<div class="t" style="left:395.25px;top:336.9px;color:#141414">1</div>
<div class="t" style="left:453.50px;top:336.9px;color:#141414">0 B</div>
<div class="t" style="left:510.50px;top:336.9px;color:#141414">3.31</div>
<div class="t" style="left:569.50px;top:336.9px;color:#141414">0.02</div>
<div class="a" style="left:4px;top:348.5px;width:1003px;height:11.8px;background:#3a72b0"></div>
<div class="tri" style="left:68.1px;top:352.0px;border-left:3.3px solid transparent;border-right:3.3px solid transparent;border-top:5.3px solid #1e3d66"></div>
<div class="t" style="left:78.50px;top:348.4px;color:#f2f5fa">TMP_UpdateManager.DoRebuilds()</div>
<div class="t" style="left:279.75px;top:348.4px;color:#f2f5fa">16.4%</div>
<div class="t" style="left:337.50px;top:348.4px;color:#f2f5fa">0.0%</div>
<div class="t" style="left:395.25px;top:348.4px;color:#f2f5fa">1</div>
<div class="t" style="left:453.50px;top:348.4px;color:#f2f5fa">0 B</div>
<div class="t" style="left:510.50px;top:348.4px;color:#f2f5fa">2.90</div>
<div class="t" style="left:569.50px;top:348.4px;color:#f2f5fa">0.00</div>
<div class="tri" style="left:78.1px;top:363.6px;border-left:3.3px solid transparent;border-right:3.3px solid transparent;border-top:5.3px solid #767676"></div>
<div class="t" style="left:88.50px;top:359.9px;color:#141414">TMP.DoRebuilds</div>
<div class="t" style="left:279.75px;top:359.9px;color:#141414">16.4%</div>
<div class="t" style="left:337.50px;top:359.9px;color:#141414">3.7%</div>
<div class="t" style="left:395.25px;top:359.9px;color:#141414">1</div>
<div class="t" style="left:453.50px;top:359.9px;color:#141414">0 B</div>
<div class="t" style="left:510.50px;top:359.9px;color:#141414">2.90</div>
<div class="t" style="left:569.50px;top:359.9px;color:#141414">0.66</div>
<div class="tri" style="left:89.0px;top:374.3px;border-top:3.2px solid transparent;border-bottom:3.2px solid transparent;border-left:5.5px solid #767676"></div>
<div class="t" style="left:98.75px;top:371.5px;color:#141414">TextMeshProUGUI.InternalUpdate()</div>
<div class="t" style="left:279.75px;top:371.5px;color:#141414">0.3%</div>
<div class="t" style="left:337.50px;top:371.5px;color:#141414">0.3%</div>
<div class="t" style="left:395.25px;top:371.5px;color:#141414">1</div>
<div class="t" style="left:453.50px;top:371.5px;color:#141414">0 B</div>
<div class="t" style="left:510.50px;top:371.5px;color:#141414">0.06</div>
<div class="t" style="left:569.50px;top:371.5px;color:#141414">0.06</div>
<div class="tri" style="left:89.0px;top:385.9px;border-top:3.2px solid transparent;border-bottom:3.2px solid transparent;border-left:5.5px solid #767676"></div>
<div class="t" style="left:98.75px;top:383.1px;color:#141414">TextMeshProUGUI.InternalUpdate()</div>
<div class="t" style="left:279.75px;top:383.1px;color:#141414">0.1%</div>
<div class="t" style="left:337.50px;top:383.1px;color:#141414">0.0%</div>
<div class="t" style="left:395.25px;top:383.1px;color:#141414">1</div>
<div class="t" style="left:453.50px;top:383.1px;color:#141414">0 B</div>
<div class="t" style="left:510.50px;top:383.1px;color:#141414">0.01</div>
<div class="t" style="left:569.50px;top:383.1px;color:#141414">0.00</div>
<div class="tri" style="left:89.0px;top:397.4px;border-top:3.2px solid transparent;border-bottom:3.2px solid transparent;border-left:5.5px solid #767676"></div>
<div class="t" style="left:98.75px;top:394.6px;color:#141414">TextMeshProUGUI.InternalUpdate()</div>
<div class="t" style="left:279.75px;top:394.6px;color:#141414">0.0%</div>
<div class="t" style="left:337.50px;top:394.6px;color:#141414">0.0%</div>
<div class="t" style="left:395.25px;top:394.6px;color:#141414">1</div>
<div class="t" style="left:453.50px;top:394.6px;color:#141414">0 B</div>
<div class="t" style="left:510.50px;top:394.6px;color:#141414">0.01</div>
<div class="t" style="left:569.50px;top:394.6px;color:#141414">0.00</div>
<div class="tri" style="left:89.0px;top:408.9px;border-top:3.2px solid transparent;border-bottom:3.2px solid transparent;border-left:5.5px solid #767676"></div>
<div class="t" style="left:98.75px;top:406.1px;color:#141414">TextMeshProUGUI.InternalUpdate()</div>
<div class="t" style="left:279.75px;top:406.1px;color:#141414">0.0%</div>
<div class="t" style="left:337.50px;top:406.1px;color:#141414">0.0%</div>
<div class="t" style="left:395.25px;top:406.1px;color:#141414">1</div>
<div class="t" style="left:453.50px;top:406.1px;color:#141414">0 B</div>
<div class="t" style="left:510.50px;top:406.1px;color:#141414">0.01</div>
<div class="t" style="left:569.50px;top:406.1px;color:#141414">0.00</div>
<div class="tri" style="left:89.0px;top:420.5px;border-top:3.2px solid transparent;border-bottom:3.2px solid transparent;border-left:5.5px solid #767676"></div>
<div class="t" style="left:98.75px;top:417.7px;color:#141414">TextMeshProUGUI.InternalUpdate()</div>
<div class="t" style="left:279.75px;top:417.7px;color:#141414">0.0%</div>
<div class="t" style="left:337.50px;top:417.7px;color:#141414">0.0%</div>
<div class="t" style="left:395.25px;top:417.7px;color:#141414">1</div>
<div class="t" style="left:453.50px;top:417.7px;color:#141414">0 B</div>
<div class="t" style="left:510.50px;top:417.7px;color:#141414">0.01</div>
<div class="t" style="left:569.50px;top:417.7px;color:#141414">0.01</div>
<div class="tri" style="left:89.0px;top:432.1px;border-top:3.2px solid transparent;border-bottom:3.2px solid transparent;border-left:5.5px solid #767676"></div>
<div class="t" style="left:98.75px;top:429.2px;color:#141414">TextMeshProUGUI.InternalUpdate()</div>
<div class="t" style="left:279.75px;top:429.2px;color:#141414">0.0%</div>
<div class="t" style="left:337.50px;top:429.2px;color:#141414">0.0%</div>
<div class="t" style="left:395.25px;top:429.2px;color:#141414">1</div>
<div class="t" style="left:453.50px;top:429.2px;color:#141414">0 B</div>
<div class="t" style="left:510.50px;top:429.2px;color:#141414">0.00</div>
<div class="t" style="left:569.50px;top:429.2px;color:#141414">0.00</div>
<div class="tri" style="left:89.0px;top:443.6px;border-top:3.2px solid transparent;border-bottom:3.2px solid transparent;border-left:5.5px solid #767676"></div>
<div class="t" style="left:98.75px;top:440.8px;color:#141414">TextMeshProUGUI.InternalUpdate()</div>
<div class="t" style="left:279.75px;top:440.8px;color:#141414">0.0%</div>
<div class="t" style="left:337.50px;top:440.8px;color:#141414">0.0%</div>
<div class="t" style="left:395.25px;top:440.8px;color:#141414">1</div>
<div class="t" style="left:453.50px;top:440.8px;color:#141414">0 B</div>
<div class="t" style="left:510.50px;top:440.8px;color:#141414">0.00</div>
<div class="t" style="left:569.50px;top:440.8px;color:#141414">0.00</div>
<div class="tri" style="left:89.0px;top:455.2px;border-top:3.2px solid transparent;border-bottom:3.2px solid transparent;border-left:5.5px solid #767676"></div>
<div class="t" style="left:98.75px;top:452.4px;color:#141414">TextMeshProUGUI.InternalUpdate()</div>
<div class="t" style="left:279.75px;top:452.4px;color:#141414">0.0%</div>
<div class="t" style="left:337.50px;top:452.4px;color:#141414">0.0%</div>
<div class="t" style="left:395.25px;top:452.4px;color:#141414">1</div>
<div class="t" style="left:453.50px;top:452.4px;color:#141414">0 B</div>
<div class="t" style="left:510.50px;top:452.4px;color:#141414">0.00</div>
<div class="t" style="left:569.50px;top:452.4px;color:#141414">0.00</div>
<div class="tri" style="left:89.0px;top:466.7px;border-top:3.2px solid transparent;border-bottom:3.2px solid transparent;border-left:5.5px solid #767676"></div>
<div class="t" style="left:98.75px;top:463.9px;color:#141414">TextMeshProUGUI.InternalUpdate()</div>
<div class="t" style="left:279.75px;top:463.9px;color:#141414">0.0%</div>
<div class="t" style="left:337.50px;top:463.9px;color:#141414">0.0%</div>
<div class="t" style="left:395.25px;top:463.9px;color:#141414">1</div>
<div class="t" style="left:453.50px;top:463.9px;color:#141414">0 B</div>
<div class="t" style="left:510.50px;top:463.9px;color:#141414">0.00</div>
<div class="t" style="left:569.50px;top:463.9px;color:#141414">0.00</div>
<div class="tri" style="left:89.0px;top:478.3px;border-top:3.2px solid transparent;border-bottom:3.2px solid transparent;border-left:5.5px solid #767676"></div>
<div class="t" style="left:98.75px;top:475.5px;color:#141414">TextMeshProUGUI.InternalUpdate()</div>
<div class="t" style="left:279.75px;top:475.5px;color:#141414">0.0%</div>
<div class="t" style="left:337.50px;top:475.5px;color:#141414">0.0%</div>
<div class="t" style="left:395.25px;top:475.5px;color:#141414">1</div>
<div class="t" style="left:453.50px;top:475.5px;color:#141414">0 B</div>
<div class="t" style="left:510.50px;top:475.5px;color:#141414">0.00</div>
<div class="t" style="left:569.50px;top:475.5px;color:#141414">0.00</div>
<div class="tri" style="left:89.0px;top:489.8px;border-top:3.2px solid transparent;border-bottom:3.2px solid transparent;border-left:5.5px solid #767676"></div>
<div class="t" style="left:98.75px;top:487.0px;color:#141414">TextMeshProUGUI.InternalUpdate()</div>
<div class="t" style="left:279.75px;top:487.0px;color:#141414">0.0%</div>
<div class="t" style="left:337.50px;top:487.0px;color:#141414">0.0%</div>
<div class="t" style="left:395.25px;top:487.0px;color:#141414">1</div>
<div class="t" style="left:453.50px;top:487.0px;color:#141414">0 B</div>
<div class="t" style="left:510.50px;top:487.0px;color:#141414">0.00</div>
<div class="t" style="left:569.50px;top:487.0px;color:#141414">0.00</div>
<div class="tri" style="left:89.0px;top:501.4px;border-top:3.2px solid transparent;border-bottom:3.2px solid transparent;border-left:5.5px solid #767676"></div>
<div class="t" style="left:98.75px;top:498.6px;color:#141414">TextMeshProUGUI.InternalUpdate()</div>
<div class="t" style="left:279.75px;top:498.6px;color:#141414">0.0%</div>
<div class="t" style="left:337.50px;top:498.6px;color:#141414">0.0%</div>
<div class="t" style="left:395.25px;top:498.6px;color:#141414">1</div>
<div class="t" style="left:453.50px;top:498.6px;color:#141414">0 B</div>
<div class="t" style="left:510.50px;top:498.6px;color:#141414">0.00</div>
<div class="t" style="left:569.50px;top:498.6px;color:#141414">0.00</div>
<div class="tri" style="left:89.0px;top:512.9px;border-top:3.2px solid transparent;border-bottom:3.2px solid transparent;border-left:5.5px solid #767676"></div>
<div class="t" style="left:98.75px;top:510.1px;color:#141414">TextMeshProUGUI.InternalUpdate()</div>
<div class="t" style="left:279.75px;top:510.1px;color:#141414">0.0%</div>
<div class="t" style="left:337.50px;top:510.1px;color:#141414">0.0%</div>
<div class="t" style="left:395.25px;top:510.1px;color:#141414">1</div>
<div class="t" style="left:453.50px;top:510.1px;color:#141414">0 B</div>
<div class="t" style="left:510.50px;top:510.1px;color:#141414">0.00</div>
<div class="t" style="left:569.50px;top:510.1px;color:#141414">0.00</div>

<!-- table scrollbar -->
<div class="a" style="left:1007px;top:312px;width:10px;height:209px;background:#bfbfbf;border-left:1px solid #a6a6a6;border-right:1px solid #d2d2d2"></div>
<div class="tri" style="left:1008.5px;top:315px;border-left:3.5px solid transparent;border-right:3.5px solid transparent;border-bottom:4px solid #3a3a3a"></div>
<div class="a" style="left:1009px;top:322.5px;width:6px;height:16px;background:#a4a4a4;border-radius:3px"></div>
<div class="tri" style="left:1008.5px;top:516.5px;border-left:3.5px solid transparent;border-right:3.5px solid transparent;border-top:4px solid #3a3a3a"></div>
</body></html>
